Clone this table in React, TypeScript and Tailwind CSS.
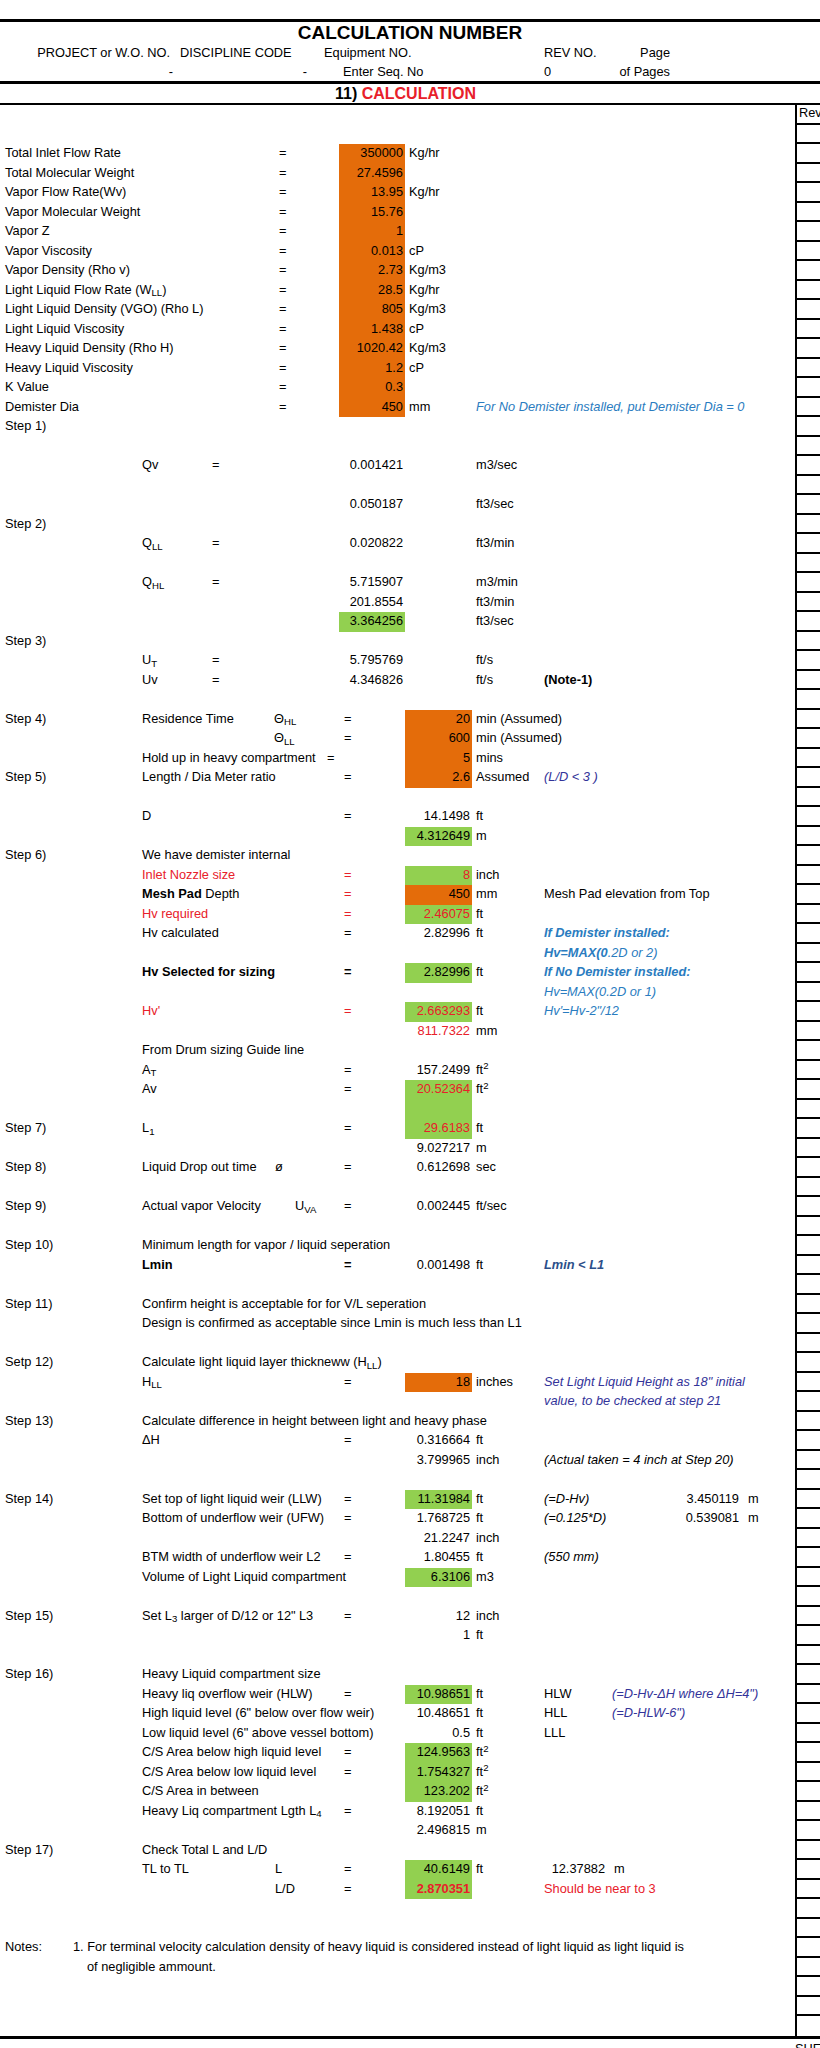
import React from "react";

type Cell = { c: number; s?: number; t: React.ReactNode; k?: string };

const START = ["", "col-start-1", "col-start-2", "col-start-3", "col-start-4", "col-start-5", "col-start-6", "col-start-7", "col-start-8", "col-start-9", "col-start-10", "col-start-11", "col-start-12"];
const SPAN = ["", "col-span-1", "col-span-2", "col-span-3", "col-span-4", "col-span-5", "col-span-6", "col-span-7", "col-span-8", "col-span-9", "col-span-10", "col-span-11"];

const GRID = "grid grid-cols-[140px_67px_65px_67px_66px_67px_68px_67px_67px_67px_54px_25px]";

// fills
const O = "bg-[#e46c0a]";
const G = "bg-[#92d050]";
const RED = "text-[#e8202a]";
const BLUE = "text-[#2a7cc0] italic";
const IND = "text-[#333399] italic";

// cell helpers
const A = (t: React.ReactNode, k = ""): Cell => ({ c: 1, t, k: `pl-[5px] ${k}` });
const B = (t: React.ReactNode, k = ""): Cell => ({ c: 2, t, k: `pl-[2px] ${k}` });
const D = (t: React.ReactNode, k = "pl-[2px]"): Cell => ({ c: 4, t, k });
const eq4: Cell = { c: 4, t: "=", k: "pl-[7px]" };
const eq3: Cell = { c: 3, t: "=", k: "pl-[5px]" };
const eq5 = (k = ""): Cell => ({ c: 5, t: "=", k: `pl-[5px] ${k}` });
const vE = (t: React.ReactNode, k = ""): Cell => ({ c: 5, t, k: `justify-end pr-[2px] ${k}` });
const vF = (t: React.ReactNode, k = ""): Cell => ({ c: 6, t, k: `justify-end pr-[2px] ${k}` });
const uF = (t: React.ReactNode): Cell => ({ c: 6, t, k: "pl-[4px]" });
const uG = (t: React.ReactNode, k = ""): Cell => ({ c: 7, t, k: `pl-[4px] ${k}` });
const nH = (t: React.ReactNode, k = ""): Cell => ({ c: 8, t, k: `pl-[4px] ${k}` });

const ft2 = (
  <>
    ft<sup>2</sup>
  </>
);

const inp = (label: React.ReactNode, val: string, unit?: string): Cell[] => {
  const r = [A(label), eq4, vE(val, O)];
  if (unit) r.push(uF(unit));
  return r;
};

const rows: Cell[][] = [
  [],
  [],
  inp("Total Inlet Flow Rate", "350000", "Kg/hr"),
  inp("Total Molecular Weight", "27.4596"),
  inp("Vapor Flow Rate(Wv)", "13.95", "Kg/hr"),
  inp("Vapor Molecular Weight", "15.76"),
  inp("Vapor Z", "1"),
  inp("Vapor Viscosity", "0.013", "cP"),
  inp("Vapor Density (Rho v)", "2.73", "Kg/m3"),
  inp(<>Light Liquid Flow Rate (W<sub>LL</sub>)</>, "28.5", "Kg/hr"),
  inp("Light Liquid Density (VGO) (Rho L)", "805", "Kg/m3"),
  inp("Light Liquid Viscosity", "1.438", "cP"),
  inp("Heavy Liquid Density (Rho H)", "1020.42", "Kg/m3"),
  inp("Heavy Liquid Viscosity", "1.2", "cP"),
  inp("K Value", "0.3"),
  [...inp("Demister Dia", "450", "mm"), uG("For No Demister installed, put Demister Dia = 0", BLUE)],
  [A("Step 1)")],
  [],
  [B("Qv"), eq3, vE("0.001421"), uG("m3/sec", "pl-[3px]")],
  [],
  [vE("0.050187"), uG("ft3/sec", "pl-[3px]")],
  [A("Step 2)")],
  [B(<>Q<sub>LL</sub></>), eq3, vE("0.020822"), uG("ft3/min", "pl-[3px]")],
  [],
  [B(<>Q<sub>HL</sub></>), eq3, vE("5.715907"), uG("m3/min", "pl-[3px]")],
  [vE("201.8554"), uG("ft3/min", "pl-[3px]")],
  [vE("3.364256", G), uG("ft3/sec", "pl-[3px]")],
  [A("Step 3)")],
  [B(<>U<sub>T</sub></>), eq3, vE("5.795769"), uG("ft/s", "pl-[3px]")],
  [B("Uv"), eq3, vE("4.346826"), uG("ft/s", "pl-[3px]"), nH("(Note-1)", "font-bold")],
  [],
  [A("Step 4)"), B("Residence Time"), D(<>Θ<sub>HL</sub></>), eq5(), vF("20", O), uG("min (Assumed)")],
  [D(<>Θ<sub>LL</sub></>), eq5(), vF("600", O), uG("min (Assumed)")],
  [B("Hold up in heavy compartment"), D("=", "pl-[55px]"), vF("5", O), uG("mins")],
  [A("Step 5)"), B("Length / Dia Meter ratio"), eq5(), vF("2.6", O), uG("Assumed"), nH("(L/D < 3 )", IND)],
  [],
  [B("D"), eq5(), vF("14.1498"), uG("ft")],
  [vF("4.312649", G), uG("m")],
  [A("Step 6)"), B("We have demister internal")],
  [B("Inlet Nozzle size", RED), eq5(RED), vF("8", `${G} ${RED}`), uG("inch")],
  [B(<><b>Mesh Pad</b> Depth</>), eq5(RED), vF("450", O), uG("mm"), nH("Mesh Pad elevation from Top")],
  [B("Hv required", RED), eq5(RED), vF("2.46075", `${G} ${RED}`), uG("ft")],
  [B("Hv calculated"), eq5(), vF("2.82996"), uG("ft"), nH("If Demister installed:", `${BLUE} font-bold`)],
  [nH(<><b>Hv=MAX(0</b>.2D or 2)</>, BLUE)],
  [B("Hv Selected for sizing", "font-bold"), eq5("font-bold"), vF("2.82996", G), uG("ft"), nH("If No Demister installed:", `${BLUE} font-bold`)],
  [nH("Hv=MAX(0.2D or 1)", BLUE)],
  [B("Hv'", RED), eq5(RED), vF("2.663293", `${G} ${RED}`), uG("ft"), nH("Hv'=Hv-2\"/12", BLUE)],
  [vF("811.7322", RED), uG("mm")],
  [B("From Drum sizing Guide line")],
  [B(<>A<sub>T</sub></>), eq5(), vF("157.2499"), uG(ft2)],
  [B("Av"), eq5(), vF("20.52364", `${G} ${RED}`), uG(ft2)],
  [vF("", G)],
  [A("Step 7)"), B(<>L<sub>1</sub></>), eq5(), vF("29.6183", `${G} ${RED}`), uG("ft")],
  [vF("9.027217"), uG("m")],
  [A("Step 8)"), B("Liquid Drop out time"), D("ø", "pl-[3px]"), eq5(), vF("0.612698"), uG("sec")],
  [],
  [A("Step 9)"), B("Actual vapor Velocity"), D(<>U<sub>VA</sub></>, "pl-[23px]"), eq5(), vF("0.002445"), uG("ft/sec")],
  [],
  [A("Step 10)"), B("Minimum length for vapor / liquid seperation")],
  [B("Lmin", "font-bold"), eq5("font-bold"), vF("0.001498"), uG("ft"), nH("Lmin < L1", "text-[#2c4f8a] italic font-bold")],
  [],
  [A("Step 11)"), B("Confirm height is acceptable for for V/L seperation")],
  [B("Design is confirmed as acceptable since Lmin is much less than L1")],
  [],
  [A("Setp 12)"), B(<>Calculate light liquid layer thickneww (H<sub>LL</sub>)</>)],
  [B(<>H<sub>LL</sub></>), eq5(), vF("18", O), uG("inches"), nH("Set Light Liquid Height as 18\" initial", IND)],
  [nH("value, to be checked at step 21", IND)],
  [A("Step 13)"), B("Calculate difference in height between light and heavy phase")],
  [B("ΔH"), eq5(), vF("0.316664"), uG("ft")],
  [vF("3.799965"), uG("inch"), nH("(Actual taken = 4 inch at Step 20)", "italic")],
  [],
  [A("Step 14)"), B("Set top of light liquid weir (LLW)"), eq5(), vF("11.31984", G), uG("ft"), nH("(=D-Hv)", "italic"), { c: 10, t: "3.450119", k: "justify-end pr-[2px]" }, { c: 11, t: "m", k: "pl-[7px]" }],
  [B("Bottom of underflow weir (UFW)"), eq5(), vF("1.768725"), uG("ft"), nH("(=0.125*D)", "italic"), { c: 10, t: "0.539081", k: "justify-end pr-[2px]" }, { c: 11, t: "m", k: "pl-[7px]" }],
  [vF("21.2247"), uG("inch")],
  [B("BTM width of underflow weir L2"), eq5(), vF("1.80455"), uG("ft"), nH("(550 mm)", "italic")],
  [B("Volume of Light Liquid compartment"), vF("6.3106", G), uG("m3")],
  [],
  [A("Step 15)"), B(<>Set L<sub>3</sub> larger of D/12 or 12"</>), D("L3", "pl-[27px]"), eq5(), vF("12"), uG("inch")],
  [vF("1"), uG("ft")],
  [],
  [A("Step 16)"), B("Heavy Liquid compartment size")],
  [B("Heavy liq overflow weir (HLW)"), eq5(), vF("10.98651", G), uG("ft"), nH("HLW"), { c: 9, t: "(=D-Hv-ΔH where ΔH=4\")", k: `pl-[5px] ${IND}` }],
  [B("High liquid level (6\" below over flow weir)"), vF("10.48651"), uG("ft"), nH("HLL"), { c: 9, t: "(=D-HLW-6\")", k: `pl-[5px] ${IND}` }],
  [B("Low liquid level (6\" above vessel bottom)"), vF("0.5"), uG("ft"), nH("LLL")],
  [B("C/S Area below high liquid level"), eq5(), vF("124.9563", G), uG(ft2)],
  [B("C/S Area below low liquid level"), eq5(), vF("1.754327", G), uG(ft2)],
  [B("C/S Area in between"), vF("123.202", G), uG(ft2)],
  [B(<>Heavy Liq compartment Lgth L<sub>4</sub></>), eq5(), vF("8.192051"), uG("ft")],
  [vF("2.496815"), uG("m")],
  [A("Step 17)"), B("Check Total L and L/D")],
  [B("TL to TL"), D("L", "pl-[3px]"), eq5(), vF("40.6149", G), uG("ft"), { c: 8, t: "12.37882", k: "justify-end pr-[2px]" }, { c: 9, t: "m", k: "pl-[7px]" }],
  [D("L/D", "pl-[3px]"), eq5(), vF("2.870351", `${G} ${RED} font-bold`), nH("Should be near to 3", RED)],
  [],
  [],
  [{ c: 1, s: 11, t: <><span className="inline-block w-[68px]">Notes:</span>1. For terminal velocity calculation density of heavy liquid is considered instead of light liquid as light liquid is</>, k: "pl-[5px]" }],
  [{ c: 1, s: 11, t: "of negligible ammount.", k: "pl-[87px]" }],
  [],
  [],
  [],
];

function Row({ cells, rev, last }: { cells: Cell[]; rev?: string; last?: boolean }) {
  return (
    <div className={`${GRID} h-[19.5px]`}>
      {cells.map((x, i) => (
        <div
          key={i}
          className={`row-start-1 ${START[x.c]} ${SPAN[x.s ?? 1]} flex items-center whitespace-nowrap ${x.k ?? ""}`}
        >
          <span>{x.t}</span>
        </div>
      ))}
      <div
        className={`row-start-1 col-start-12 border-l-2 border-black flex items-center pl-[2px] whitespace-nowrap ${last ? "" : "border-b-2"}`}
      >
        {rev}
      </div>
    </div>
  );
}

export default function App() {
  return (
    <div
      className="w-[820px] h-[2048px] overflow-hidden bg-white text-black text-[12.8px] leading-none"
      style={{ fontFamily: '"Liberation Sans", Arial, sans-serif' }}
    >
      {/* Title block */}
      <div className="h-[19px]" />
      <div className="border-t-[3px] border-black" />
      <div className="h-[21px] flex items-center justify-center text-[19px] font-bold">CALCULATION NUMBER</div>
      <div className="h-[20px] flex items-center">
        <div className="w-[180px] text-right pr-[10px]">PROJECT or W.O. NO.</div>
        <div className="w-[144px]">DISCIPLINE CODE</div>
        <div className="w-[220px]">Equipment NO.</div>
        <div className="w-[56px]">REV NO.</div>
        <div className="w-[72px] text-right pr-[2px]">Page</div>
      </div>
      <div className="h-[18px] flex items-center">
        <div className="w-[180px] text-right pr-[7px]">-</div>
        <div className="w-[144px] text-right pr-[17px]">-</div>
        <div className="w-[220px] pl-[19px]">Enter Seq. No</div>
        <div className="w-[56px]">0</div>
        <div className="w-[72px] text-right pr-[2px]">of Pages</div>
      </div>
      <div className="border-t-[3px] border-black" />
      <div className="h-[19px] flex items-center justify-center pr-[9px] text-[16px] font-bold">
        11)&nbsp;<span className="text-[#e8202a]">CALCULATION</span>
      </div>
      <div className="border-t-2 border-black" />

      {/* Sheet body */}
      {rows.map((r, i) => (
        <Row key={i} cells={r} rev={i === 0 ? "Rev" : undefined} last={i === rows.length - 1} />
      ))}
      <div className="border-t-[3px] border-black" />
      <div className="pl-[795px] pt-[4px] whitespace-nowrap">SHEET</div>
    </div>
  );
}
